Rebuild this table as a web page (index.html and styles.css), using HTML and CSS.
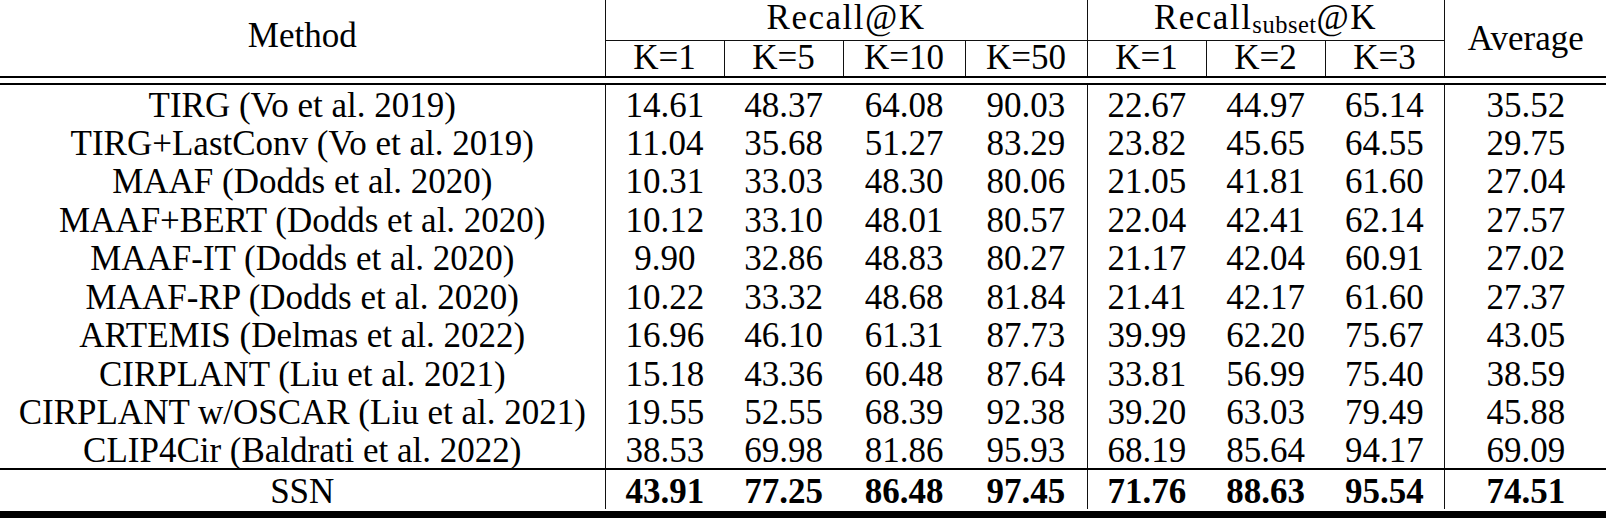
FILE: index.html
```html
<!DOCTYPE html>
<html lang="en">
<head>
    <meta charset="UTF-8">
    <meta name="viewport" content="width=device-width, initial-scale=1.0">
    <title>results</title>
    <link rel="stylesheet" href="styles.css">
</head>
<body>
    <table class="results">
        <colgroup>
            <col class="c-method">
            <col class="c-k"><col class="c-k"><col class="c-k10"><col class="c-k10">
            <col class="c-k"><col class="c-k"><col class="c-k">
            <col class="c-avg">
        </colgroup>
        <thead>
            <tr class="head-top">
                <th rowspan="2" class="method">Method</th>
                <th colspan="4" class="group">Recall@K</th>
                <th colspan="3" class="group">Recall<sub>subset</sub>@K</th>
                <th rowspan="2" class="avg">Average</th>
            </tr>
            <tr class="head-k">
                <th>K=1</th><th>K=5</th><th>K=10</th><th>K=50</th>
                <th>K=1</th><th>K=2</th><th>K=3</th>
            </tr>
        </thead>
        <tbody>
            <tr class="gap"><td colspan="9"></td></tr>
            <tr class="first">
                <td>TIRG (Vo et al. 2019)</td>
                <td class="g">14.61</td><td>48.37</td><td>64.08</td><td>90.03</td>
                <td class="g">22.67</td><td>44.97</td><td>65.14</td><td class="g">35.52</td>
            </tr>
            <tr>
                <td>TIRG+LastConv (Vo et al. 2019)</td>
                <td class="g">11.04</td><td>35.68</td><td>51.27</td><td>83.29</td>
                <td class="g">23.82</td><td>45.65</td><td>64.55</td><td class="g">29.75</td>
            </tr>
            <tr>
                <td>MAAF (Dodds et al. 2020)</td>
                <td class="g">10.31</td><td>33.03</td><td>48.30</td><td>80.06</td>
                <td class="g">21.05</td><td>41.81</td><td>61.60</td><td class="g">27.04</td>
            </tr>
            <tr>
                <td>MAAF+BERT (Dodds et al. 2020)</td>
                <td class="g">10.12</td><td>33.10</td><td>48.01</td><td>80.57</td>
                <td class="g">22.04</td><td>42.41</td><td>62.14</td><td class="g">27.57</td>
            </tr>
            <tr>
                <td>MAAF-IT (Dodds et al. 2020)</td>
                <td class="g">9.90</td><td>32.86</td><td>48.83</td><td>80.27</td>
                <td class="g">21.17</td><td>42.04</td><td>60.91</td><td class="g">27.02</td>
            </tr>
            <tr>
                <td>MAAF-RP (Dodds et al. 2020)</td>
                <td class="g">10.22</td><td>33.32</td><td>48.68</td><td>81.84</td>
                <td class="g">21.41</td><td>42.17</td><td>61.60</td><td class="g">27.37</td>
            </tr>
            <tr>
                <td>ARTEMIS (Delmas et al. 2022)</td>
                <td class="g">16.96</td><td>46.10</td><td>61.31</td><td>87.73</td>
                <td class="g">39.99</td><td>62.20</td><td>75.67</td><td class="g">43.05</td>
            </tr>
            <tr>
                <td>CIRPLANT (Liu et al. 2021)</td>
                <td class="g">15.18</td><td>43.36</td><td>60.48</td><td>87.64</td>
                <td class="g">33.81</td><td>56.99</td><td>75.40</td><td class="g">38.59</td>
            </tr>
            <tr>
                <td>CIRPLANT w/OSCAR (Liu et al. 2021)</td>
                <td class="g">19.55</td><td>52.55</td><td>68.39</td><td>92.38</td>
                <td class="g">39.20</td><td>63.03</td><td>79.49</td><td class="g">45.88</td>
            </tr>
            <tr>
                <td>CLIP4Cir (Baldrati et al. 2022)</td>
                <td class="g">38.53</td><td>69.98</td><td>81.86</td><td>95.93</td>
                <td class="g">68.19</td><td>85.64</td><td>94.17</td><td class="g">69.09</td>
            </tr>
            <tr class="best">
                <td>SSN</td>
                <td class="g"><b>43.91</b></td><td><b>77.25</b></td><td><b>86.48</b></td><td><b>97.45</b></td>
                <td class="g"><b>71.76</b></td><td><b>88.63</b></td><td><b>95.54</b></td><td class="g"><b>74.51</b></td>
            </tr>
            <tr class="tail"><td colspan="9"></td></tr>
        </tbody>
    </table>
</body>
</html>
```

FILE: styles.css
```css
*{
    margin: 0;
    padding: 0;
}
body{
    background: #fff;
    color: #000;
}
.results{
    width: 1606px;
    table-layout: fixed;
    border-collapse: collapse;
    font-family: "Liberation Serif", "Times New Roman", serif;
    font-size: 35px;
}
.c-method{ width: 605px; }
.c-k{ width: 119px; }
.c-k10{ width: 122px; }
.c-avg{ width: 163px; }
th, td{
    font-weight: normal;
    text-align: center;
    white-space: nowrap;
    padding: 0;
}
/* header */
thead th{
    border-left: 1px solid #111;
}
thead th.method{
    border-left: none;
}
.head-top th{
    height: 40px;
    line-height: 32px;
    vertical-align: middle;
}
.head-top th.group{
    border-bottom: 1px solid #111;
    letter-spacing: 1.5px;
    line-height: 30px;
    padding-bottom: 4px;
    box-sizing: border-box;
}
.head-top th.method{
    border-bottom: 2px solid #000;
    padding-bottom: 4px;
}
.head-top th.avg{
    border-bottom: 2px solid #000;
    padding-top: 2px;
}
.head-k th{
    height: 35px;
    line-height: 32px;
    border-bottom: 2px solid #000;
}
sub{
    font-size: 0.7em;
    line-height: 0;
    letter-spacing: 0.5px;
    vertical-align: -0.15em;
}
/* body */
tbody td{
    height: 38.5px;
    line-height: 32px;
    padding-top: 5px;
    box-sizing: border-box;
}
tbody td.g{
    border-left: 1px solid #111;
}
tr.gap td{
    height: 7px;
    padding: 0;
    line-height: 0;
}
tr.first td{
    border-top: 2px solid #000;
}
tr.best td{
    height: 40px;
    border-top: 2px solid #000;
}
tr.best b{
    font-weight: bold;
}
tr.tail td{
    box-sizing: content-box;
    height: 2px;
    padding: 0;
    line-height: 0;
    border-bottom: 7px solid #000;
}
```
